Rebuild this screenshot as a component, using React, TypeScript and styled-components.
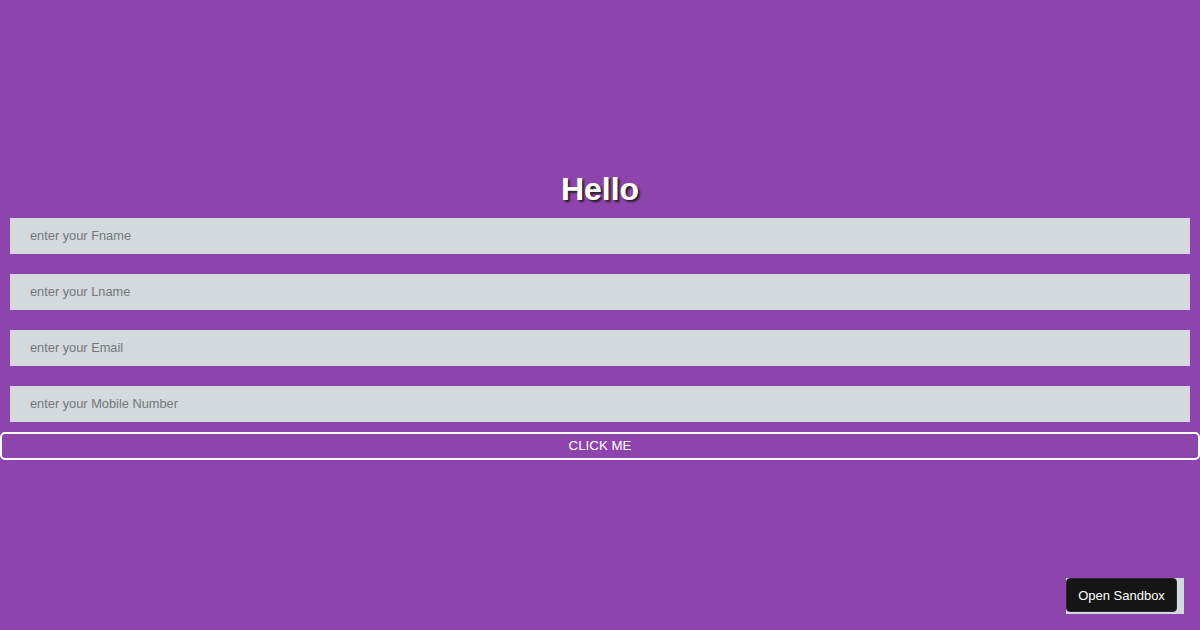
import React from 'react';
import styled, { createGlobalStyle } from 'styled-components';

const GlobalStyle = createGlobalStyle`
  html, body {
    margin: 0;
    padding: 0;
    background: #8e44ad;
    font-family: "Liberation Sans", Arial, sans-serif;
  }
`;

const Page = styled.div`
  height: 100vh;
  display: flex;
  flex-direction: column;
  justify-content: center;
`;

const Title = styled.h1`
  margin: 0;
  text-align: center;
  color: #fff;
  font-size: 32px;
  font-weight: 700;
  line-height: 38px;
  text-shadow: 2px 2px 2px #222;
`;

const Field = styled.input`
  display: block;
  margin: 10px;
  height: 36px;
  box-sizing: border-box;
  padding: 0 20px 2px;
  border: none;
  outline: none;
  background: #d2dadd;
  font-family: "Liberation Sans", Arial, sans-serif;
  font-size: 12.8px;
  color: #333;

  &::placeholder {
    color: #777;
  }
`;

const SubmitButton = styled.button`
  display: block;
  width: 100%;
  height: 28px;
  padding: 0 0 2px;
  background: transparent;
  border: 2px solid #fff;
  border-radius: 5px;
  color: #fff;
  font-family: "Liberation Sans", Arial, sans-serif;
  font-size: 13.33px;
  cursor: pointer;
`;

const SandboxBadge = styled.div`
  position: fixed;
  right: 16px;
  bottom: 16px;
  width: 118px;
  height: 36px;
  background: #d2dadd;
`;

const SandboxButton = styled.a`
  display: flex;
  align-items: center;
  justify-content: center;
  width: 111px;
  height: 34px;
  box-sizing: border-box;
  background: #151515;
  border: 1px solid #2a2a2a;
  border-radius: 4px;
  color: #fff;
  font-family: "Liberation Sans", Arial, sans-serif;
  font-size: 13px;
  text-decoration: none;
`;

const fields = ['Fname', 'Lname', 'Email', 'Mobile Number'];

export default function App() {
  return (
    <>
      <GlobalStyle />
      <Page>
        <Title>Hello</Title>
        {fields.map((f) => (
          <Field key={f} placeholder={`enter your ${f}`} />
        ))}
        <SubmitButton>CLICK ME</SubmitButton>
      </Page>
      <SandboxBadge>
        <SandboxButton href="#">Open Sandbox</SandboxButton>
      </SandboxBadge>
    </>
  );
}
